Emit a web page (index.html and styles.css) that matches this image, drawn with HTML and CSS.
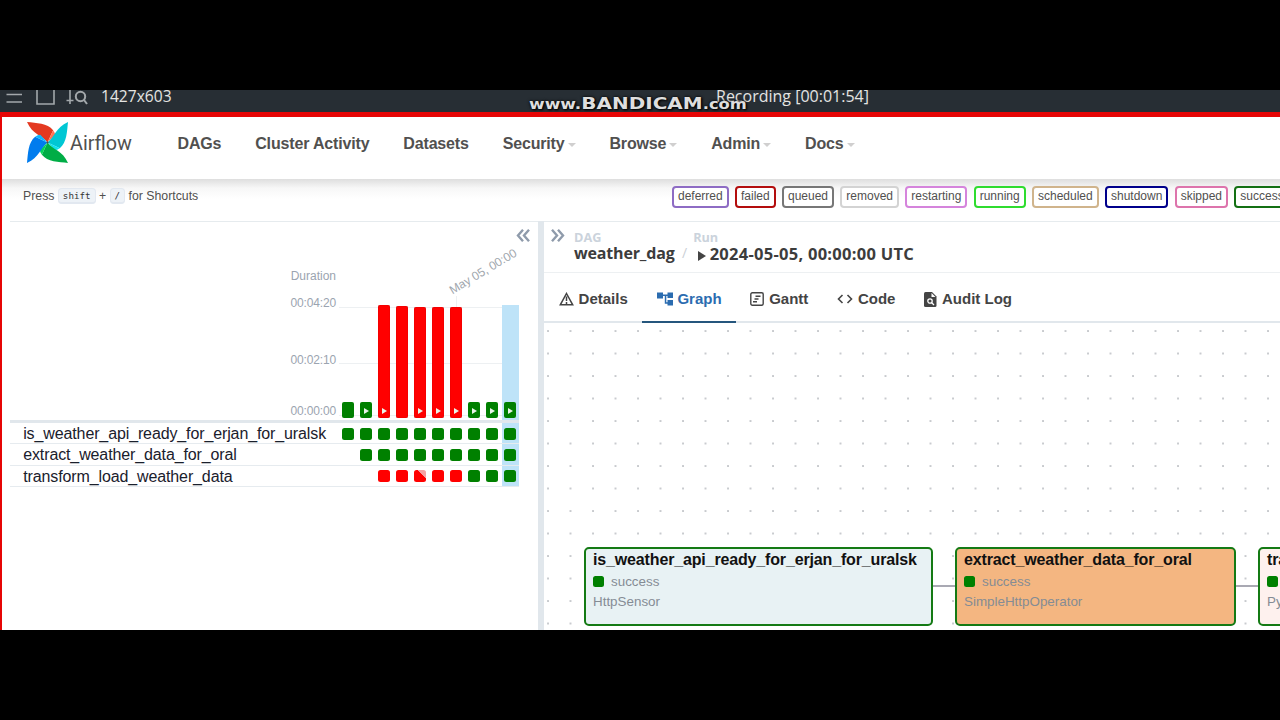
FILE: index.html
```html
<!DOCTYPE html>
<html lang="en">
<head>
    <meta charset="UTF-8">
    <meta name="viewport" content="width=device-width, initial-scale=1.0">
    <title>weather_dag - Airflow</title>
    <link rel="stylesheet" href="styles.css">
</head>
<body>
<div class="screen">
    <!-- Recorder bar -->
    <div class="recorder">
        <svg class="rec-icons" width="90" height="22" viewBox="0 0 90 22" fill="none" stroke="#a3a8ab" stroke-width="1.600">
            <path d="M6.500 4.500H22M6.500 12H22"/>
            <path d="M37 0V14H54V0"/>
            <path d="M70 0V14M66.500 10.500H73.500"/>
            <circle cx="80.500" cy="6.500" r="4.700" stroke-width="2"/>
            <path d="M84 10L87 14" stroke-width="2"/>
        </svg>
        <span class="rec-size">1427x603</span>
        <span class="rec-time">Recording [00:01:54]</span>
        <div class="watermark"><span class="wm-www">www.</span><span class="wm-name">BANDICAM</span><span class="wm-com">.com</span></div>
    </div>

    <div class="page">
        <nav class="navbar">
            <div class="brand">
                <svg width="41" height="41" viewBox="0 0 40 40">
                    <g id="blades">
                        <path fill="#e43921" d="M0 0C9 1 20 1 25.500 8L20 20C15 13 5 12 0 0Z"/>
                        <path fill="#ff7557" d="M25.500 8Q27.500 10.500 27.500 13L20 20Z"/>
                        <g transform="rotate(90 20 20)">
                            <path fill="#00c7d4" d="M0 0C9 1 20 1 25.500 8L20 20C15 13 5 12 0 0Z"/>
                            <path fill="#11e1ee" d="M25.500 8Q27.500 10.500 27.500 13L20 20Z"/>
                        </g>
                        <g transform="rotate(180 20 20)">
                            <path fill="#00ad46" d="M0 0C9 1 20 1 25.500 8L20 20C15 13 5 12 0 0Z"/>
                            <path fill="#04d659" d="M25.500 8Q27.500 10.500 27.500 13L20 20Z"/>
                        </g>
                        <g transform="rotate(270 20 20)">
                            <path fill="#017cee" d="M0 0C9 1 20 1 25.500 8L20 20C15 13 5 12 0 0Z"/>
                            <path fill="#0cb6ff" d="M25.500 8Q27.500 10.500 27.500 13L20 20Z"/>
                        </g>
                    </g>
                    <circle cx="20" cy="20" r="1" fill="#51504f"/>
                </svg>
                <span class="brand-name">Airflow</span>
            </div>
            <ul class="menu">
                <li>DAGs</li>
                <li>Cluster Activity</li>
                <li>Datasets</li>
                <li>Security<i class="caret"></i></li>
                <li>Browse<i class="caret"></i></li>
                <li>Admin<i class="caret"></i></li>
                <li>Docs<i class="caret"></i></li>
            </ul>
        </nav>

        <div class="legend-row">
            <div class="shortcuts">Press <kbd>shift</kbd> + <kbd>/</kbd> for Shortcuts</div>
            <div class="states">
                <span class="state deferred">deferred</span>
                <span class="state failed">failed</span>
                <span class="state queued">queued</span>
                <span class="state removed">removed</span>
                <span class="state restarting">restarting</span>
                <span class="state running">running</span>
                <span class="state scheduled">scheduled</span>
                <span class="state shutdown">shutdown</span>
                <span class="state skipped">skipped</span>
                <span class="state success">success</span>
            </div>
        </div>

        <div class="main">
            <!-- Left: run durations and task grid -->
            <section class="grid-panel">
                <svg class="collapse" width="14" height="13" viewBox="0 0 14 13" fill="none" stroke="#8f9bab" stroke-width="2.400"><path d="M7 .8L2 6.500L7 12.200M13 .8L8 6.500L13 12.200"/></svg>
                <div class="run-date">May 05, 00:00</div>
                <div class="chart">
                    <div class="axis">
                        <span class="axis-title">Duration</span>
                        <span class="tick-max">00:04:20</span>
                        <span class="tick-mid">00:02:10</span>
                        <span class="tick-min">00:00:00</span>
                    </div>
                    <div class="bars">
                        <div class="col"><div class="bar ok" style="height:16px"></div></div>
                        <div class="col"><div class="bar ok play" style="height:16px"></div></div>
                        <div class="col"><div class="bar bad play" style="height:113px"></div></div>
                        <div class="col"><div class="bar bad" style="height:112px"></div></div>
                        <div class="col"><div class="bar bad play" style="height:111px"></div></div>
                        <div class="col"><div class="bar bad play" style="height:111px"></div></div>
                        <div class="col"><div class="bar bad play" style="height:111px"></div></div>
                        <div class="col"><div class="bar ok play" style="height:16px"></div></div>
                        <div class="col"><div class="bar ok play" style="height:16px"></div></div>
                        <div class="col selected"><div class="bar ok play" style="height:16px"></div></div>
                    </div>
                </div>
                <div class="tasks">
                    <div class="task">
                        <span class="task-name">is_weather_api_ready_for_erjan_for_uralsk</span>
                        <div class="cells"><b class="ok"></b><b class="ok"></b><b class="ok"></b><b class="ok"></b><b class="ok"></b><b class="ok"></b><b class="ok"></b><b class="ok"></b><b class="ok"></b><b class="ok"></b></div>
                    </div>
                    <div class="task">
                        <span class="task-name">extract_weather_data_for_oral</span>
                        <div class="cells"><b></b><b class="ok"></b><b class="ok"></b><b class="ok"></b><b class="ok"></b><b class="ok"></b><b class="ok"></b><b class="ok"></b><b class="ok"></b><b class="ok"></b></div>
                    </div>
                    <div class="task">
                        <span class="task-name">transform_load_weather_data</span>
                        <div class="cells"><b></b><b></b><b class="bad"></b><b class="bad"></b><b class="bad noted"></b><b class="bad"></b><b class="bad"></b><b class="ok"></b><b class="ok"></b><b class="ok"></b></div>
                    </div>
                </div>
            </section>

            <!-- Right: run details -->
            <section class="details">
                <header class="crumbs">
                    <svg class="expand" width="14" height="13" viewBox="0 0 14 13" fill="none" stroke="#8f9bab" stroke-width="2.400"><path d="M1 .8L6 6.500L1 12.200M7 .8L12 6.500L7 12.200"/></svg>
                    <div class="crumb">
                        <small>DAG</small>
                        <strong>weather_dag</strong>
                    </div>
                    <span class="slash">/</span>
                    <div class="crumb run">
                        <small>Run</small>
                        <strong><i class="run-arrow"></i>2024-05-05, 00:00:00 UTC</strong>
                    </div>
                </header>
                <div class="tabs">
                    <div class="tab">
                        <svg width="15" height="14" viewBox="0 0 15 14" fill="none" stroke="#444" stroke-width="1.500"><path d="M7.500 1.500L13.700 12.800H1.300ZM7.500 4.500V9M7.500 10V12"/></svg>
                        <span>Details</span>
                    </div>
                    <div class="tab active">
                        <svg width="16" height="14" viewBox="0 0 16 14" fill="#2b6cb0"><path d="M0 .5H6V6.500H0ZM10.500 .5H16V6H10.500ZM10.500 8H16V13.500H10.500ZM6 2.500H11V4H9.300V10.200H11V11.700H7.800V4H6Z"/></svg>
                        <span>Graph</span>
                    </div>
                    <div class="tab">
                        <svg width="14" height="14" viewBox="0 0 14 14" fill="none" stroke="#444" stroke-width="1.400"><rect x=".8" y=".8" width="12.400" height="12.400" rx="1.500"/><path d="M5.500 4.200H10.500M4.500 7H8.500M3 9.800H7"/></svg>
                        <span>Gantt</span>
                    </div>
                    <div class="tab">
                        <svg width="16" height="14" viewBox="0 0 16 14" fill="none" stroke="#444" stroke-width="1.600"><path d="M5.500 3L1.500 7L5.500 11M10.500 3L14.500 7L10.500 11"/></svg>
                        <span>Code</span>
                    </div>
                    <div class="tab">
                        <svg width="13" height="15" viewBox="0 0 13 15"><path fill="#444" d="M1.500 0H8L12.500 4.500V13.500Q12.500 15 11 15H1.500Q0 15 0 13.500V1.500Q0 0 1.500 0Z"/><path fill="#fff" d="M7.500 1L11.500 5H7.500Z"/><circle cx="6" cy="9" r="2.200" fill="none" stroke="#fff" stroke-width="1.300"/><path d="M7.500 10.500L10 13" stroke="#fff" stroke-width="1.300"/></svg>
                        <span>Audit Log</span>
                    </div>
                </div>
                <div class="graph">
                    <div class="edge e1"></div>
                    <div class="edge e2"></div>
                    <div class="node n1">
                        <h3>is_weather_api_ready_for_erjan_for_uralsk</h3>
                        <p class="status"><b class="ok"></b>success</p>
                        <p>HttpSensor</p>
                    </div>
                    <div class="node n2">
                        <h3>extract_weather_data_for_oral</h3>
                        <p class="status"><b class="ok"></b>success</p>
                        <p>SimpleHttpOperator</p>
                    </div>
                    <div class="node n3">
                        <h3>transform_load_weather_data</h3>
                        <p class="status"><b class="ok"></b>success</p>
                        <p>PythonOperator</p>
                    </div>
                </div>
            </section>
        </div>
    </div>
</div>
</body>
</html>
```
FILE: styles.css
```css
* {
    box-sizing: border-box;
}
body {
    margin: 0;
    padding: 90px 0;
    height: 720px;
    overflow: hidden;
    background-color: #000;
    font-family: "Liberation Sans", Arial, sans-serif;
    color: #51504f;
}
.screen {
    height: 540px;
    overflow: hidden;
    display: flex;
    flex-direction: column;
}

/* Recorder bar */
.recorder {
    position: relative;
    height: 22px;
    flex: none;
    display: flex;
    align-items: flex-start;
    background-color: #272e34;
    color: #e4e4e2;
    font-family: "Open Sans", "Noto Sans", sans-serif;
    line-height: 12px;
    overflow: hidden;
    white-space: nowrap;
}
.rec-icons {
    flex: none;
}
.rec-size {
    width: 615px;
    padding-left: 11px;
    font-size: 15.6px;
}
.rec-time {
    padding-left: 11px;
    font-size: 16px;
}
.watermark {
    position: absolute;
    left: 529px;
    top: 5px;
    display: flex;
    align-items: baseline;
    line-height: 17px;
    font-family: "DejaVu Sans", sans-serif;
    font-weight: bold;
    color: #dedede;
    text-shadow: 0 0 3px #000, 1px 1px 2px #000;
    transform: scaleX(1.21);
    transform-origin: 0 0;
}
.wm-www {
    font-size: 14px;
}
.wm-name {
    font-size: 16.5px;
}
.wm-com {
    font-size: 13.5px;
}

.page {
    flex: 1;
    min-height: 0;
    display: flex;
    flex-direction: column;
    border-top: 5px solid #e60505;
    border-left: 2px solid #e60505;
    background-color: #fff;
}

/* Navigation */
.navbar {
    height: 62px;
    flex: none;
    display: flex;
    padding-left: 25px;
}
.brand {
    display: flex;
    width: 150.5px;
    padding-top: 5px;
}
.brand-name {
    font-family: Roboto, sans-serif;
    font-size: 19.8px;
    line-height: 43px;
    margin-left: 2px;
}
.menu {
    display: flex;
    gap: 33.9px;
    margin: 0;
    padding: 0;
    list-style: none;
    font-size: 16px;
    font-weight: bold;
    letter-spacing: -0.16px;
    line-height: 54px;
    white-space: nowrap;
}
.caret {
    display: inline-block;
    margin-left: 3px;
    vertical-align: 2px;
    border: 4px solid transparent;
    border-top-color: #d0cfcf;
    border-bottom: 0;
}

/* Shortcuts and state legend */
.legend-row {
    height: 42px;
    flex: none;
    display: flex;
    padding: 7px 0 0 21px;
    background: linear-gradient(#dedede, #f7f7f7 9px, #fff 20px);
    overflow: hidden;
    white-space: nowrap;
    font-size: 12px;
}
.shortcuts {
    width: 649px;
    flex: none;
    line-height: 21px;
    font-size: 12.3px;
}
kbd {
    padding: 1px 4px;
    border: 1px solid #e2e8f0;
    border-bottom-width: 2px;
    border-radius: 4px;
    background-color: #edf2f7;
    font: 9.200px "DejaVu Sans Mono", monospace;
    vertical-align: 1px;
    color: #333;
}
.states {
    display: flex;
    gap: 6.3px;
}
.state {
    height: 22px;
    padding: 0 4px;
    border: 2px solid;
    border-radius: 4px;
    background-color: #fff;
    line-height: 17px;
}
.deferred { border-color: #8e6cc4; }
.failed { border-color: #b30d0d; }
.queued { border-color: #777; }
.removed { border-color: #d3d3d3; }
.restarting { border-color: #d584dc; }
.running { border-color: #2fdc2f; }
.scheduled { border-color: #d0b48c; }
.shutdown { border-color: #00008b; }
.skipped { border-color: #dd74ac; }
.success { border-color: #147014; }

.main {
    flex: 1;
    min-height: 0;
    display: flex;
}

/* Grid panel */
.grid-panel {
    position: relative;
    width: 542px;
    flex: none;
    padding-left: 8px;
    border-right: 6px solid #e1e7ec;
    background: linear-gradient(#e6ebee, #e6ebee) 8px 0 / 100% 1px no-repeat;
}
.collapse {
    position: absolute;
    left: 514px;
    top: 8px;
}
.run-date {
    position: absolute;
    left: 452px;
    top: 62px;
    color: #a0a6ad;
    font-size: 12px;
    line-height: 14px;
    white-space: nowrap;
    transform: rotate(-31deg);
    transform-origin: 0 100%;
}
.chart {
    display: flex;
    width: 509px;
    height: 199px;
}
.axis {
    width: 326px;
    display: flex;
    flex-direction: column;
    align-items: flex-end;
    padding-top: 48px;
    color: #9ba4b0;
    font-size: 12px;
    letter-spacing: -0.15px;
    line-height: 14px;
}
.axis-title { letter-spacing: 0; }
.tick-max { margin-top: 13px; }
.tick-mid { margin-top: 43px; }
.tick-min { margin-top: 37px; }
.bars {
    display: flex;
    margin-left: 3px;
    padding-top: 84px;
    background:
        linear-gradient(#edf0f2, #edf0f2) 0 86px / 100% 1px no-repeat,
        linear-gradient(#edf0f2, #edf0f2) 0 142px / 100% 1px no-repeat,
        linear-gradient(#edf0f2, #edf0f2) 0 194px / 100% 1px no-repeat,
        linear-gradient(#edf0f2, #edf0f2) 117px 75px / 1px 12px no-repeat;
}
.col {
    width: 18px;
    display: flex;
    justify-content: center;
    align-items: flex-end;
    padding-bottom: 2px;
}
.col.selected {
    background: linear-gradient(#bee3f8, #bee3f8) 1px 0 no-repeat;
}
.bar {
    width: 12px;
    border-radius: 2px;
    display: flex;
    justify-content: center;
    align-items: flex-end;
    padding-bottom: 4px;
}
.ok { background-color: #008000; }
.bad { background-color: #f00; }
.bar.bad { box-shadow: inset 0 0 1px #900; }
.play::after {
    content: "";
    margin-left: 1px;
    border: 3px solid transparent;
    border-left: 5px solid #e9f4e9;
    border-right: 0;
}
.tasks {
    width: 509px;
    border-top: 3px solid #e1e7ec;
}
.task {
    height: 21.2px;
    display: flex;
    border-bottom: 1px solid #e6ebef;
}
.task:first-child {
    height: 21.4px;
}
.task-name {
    width: 329px;
    padding-left: 13.2px;
    color: #1a202c;
    font-size: 16px;
    letter-spacing: -0.12px;
    line-height: 22px;
    white-space: nowrap;
}
.cells {
    display: flex;
    align-items: center;
    padding: 1px 0 0 3px;
    gap: 6px;
    background: linear-gradient(#bee3f8, #bee3f8) 163px 0 no-repeat;
    width: 180px;
}
.cells b,
.status b {
    width: 12px;
    height: 12px;
    flex: none;
    border-radius: 2.500px;
}
.noted {
    background: linear-gradient(45deg, #f00 64%, #f5a3a3 66%);
}

/* Details panel */
.details {
    flex: 1;
    min-width: 0;
    display: flex;
    flex-direction: column;
    overflow: hidden;
    border-top: 1px solid #e6ebee;
}
.crumbs {
    height: 51px;
    flex: none;
    display: flex;
    padding: 7px 0 0 7px;
    border-bottom: 1px solid #edf0f2;
    font-family: "Open Sans", "Noto Sans", sans-serif;
    white-space: nowrap;
}
.crumb {
    width: 101px;
    margin-left: 9px;
    display: flex;
    flex-direction: column;
}
.crumb small {
    color: #cbd3dc;
    font-size: 12.7px;
    font-weight: bold;
    line-height: 17px;
}
.crumb strong {
    color: #3c3c3c;
    font-size: 16px;
    font-weight: bold;
    letter-spacing: -0.17px;
    line-height: 15px;
}
.slash {
    margin: 16px 0 0 7px;
    color: #cbd0d6;
    font-size: 14px;
    line-height: 16px;
}
.crumb.run {
    width: auto;
    margin-left: 6px;
}
.crumb.run strong {
    font-size: 16.5px;
    letter-spacing: 0.27px;
}
.run-arrow {
    display: inline-block;
    margin: 0 3.5px 0 5px;
    border: 5px solid transparent;
    border-left: 8px solid #444;
    border-right: 0;
    vertical-align: -1px;
}
.tabs {
    height: 50px;
    flex: none;
    display: flex;
    border-bottom: 2px solid #e1e7ec;
    color: #444;
    font-size: 15px;
    font-weight: bold;
    line-height: 18px;
    white-space: nowrap;
}
.tab {
    display: flex;
    align-items: center;
    gap: 4.8px;
    padding: 4px 14px 2px 14.8px;
    height: 50px;
}
.active {
    color: #2b6cb0;
    border-bottom: 2px solid #25567d;
    padding-bottom: 0;
}
.graph {
    position: relative;
    flex: 1;
    background: radial-gradient(circle at 1px 1px, #b9bcc1 0.6px, transparent 1px) 3px 7px / 22.5px 22.5px;
}
.node {
    position: absolute;
    top: 224px;
    height: 79px;
    padding: 2px 7px;
    border: 2px solid #147a14;
    border-radius: 5px;
    white-space: nowrap;
    overflow: hidden;
}
.n1 {
    left: 40px;
    width: 349px;
    background-color: #e8f2f4;
}
.n2 {
    left: 411px;
    width: 281px;
    background-color: #f4b681;
}
.n3 {
    left: 714px;
    width: 290px;
    background-color: #fef1ee;
}
.node h3 {
    margin: 0;
    color: #111;
    font-size: 16px;
    letter-spacing: -0.15px;
    line-height: 18px;
}
.node p {
    margin: 0;
    color: #858c94;
    font-size: 13.4px;
    line-height: 20px;
}
.node .status {
    display: flex;
    align-items: center;
    gap: 7px;
    margin-top: 3px;
}
.status b {
    width: 11px;
    height: 11px;
    margin-top: -1px;
}
.edge {
    position: absolute;
    top: 262px;
    height: 2px;
    background-color: #a9a9b3;
}
.e1 {
    left: 388px;
    width: 24px;
}
.e2 {
    left: 691px;
    width: 24px;
}
```
